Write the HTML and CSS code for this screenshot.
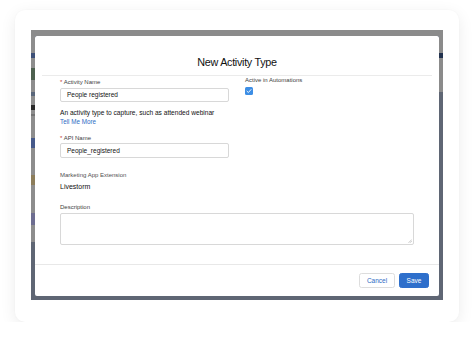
FILE: index.html
```html
<!DOCTYPE html>
<html lang="en">
<head>
<meta charset="utf-8">
<title>New Activity Type</title>
<link rel="stylesheet" href="styles.css">
</head>
<body>
<div class="card">
  <div class="frame">
    <div class="modal">
      <div class="modal-header">
        <h2 class="title">New Activity Type</h2>
      </div>
      <div class="modal-body">
        <div class="row">
          <div class="col-left">
            <div class="label"><span class="req">*</span> Activity Name</div>
            <div class="input">People registered</div>
            <div class="help">An activity type to capture, such as attended webinar</div>
            <a class="link">Tell Me More</a>
            <div class="label label-api"><span class="req">*</span> API Name</div>
            <div class="input input-api">People_registered</div>
            <div class="label label-ext">Marketing App Extension</div>
            <div class="value">Livestorm</div>
          </div>
          <div class="col-right">
            <div class="label label-active">Active in Automations</div>
            <div class="checkbox">
              <svg viewBox="0 0 8 8" width="8" height="8"><path d="M2 4.2 L3.4 5.5 L6 2.6" fill="none" stroke="#fff" stroke-width="0.9" stroke-linecap="round" stroke-linejoin="round"/></svg>
            </div>
          </div>
        </div>
        <div class="label label-desc">Description</div>
        <div class="textarea">
          <svg class="grip" viewBox="0 0 4 4" width="4" height="4"><path d="M0.5 3.8 L3.8 0.5 M2 3.8 L3.8 2" stroke="#999" stroke-width="0.5"/></svg>
        </div>
      </div>
      <div class="modal-footer">
        <button class="btn btn-neutral">Cancel</button>
        <button class="btn btn-brand">Save</button>
      </div>
    </div>
  </div>
</div>
</body>
</html>
```

FILE: styles.css
```css
* { box-sizing: border-box; }
html, body { margin: 0; padding: 0; background: #ffffff; }
body {
  font-family: "Liberation Sans", Arial, sans-serif;
  color: #181818;
  padding: 10px 15px 0 15px;
}
.card {
  width: 444px;
  height: 312px;
  background: #ffffff;
  border-radius: 10px;
  box-shadow: 0 4px 16px rgba(0,0,0,0.08), 0 0 2px rgba(0,0,0,0.03);
  padding: 20px 16px 22px 16px;
}
.frame {
  width: 412px;
  height: 270px;
  padding: 6px 4px 4px 4px;
  background-color: #5f6674;
  background-image:
    linear-gradient(#8b8b8b, #8b8b8b),
    linear-gradient(to bottom,
      #8d8d8d 0, #8d8d8d 23px, #3d5078 23px, #3d5078 28px,
      #8d8d8d 28px, #8d8d8d 38px, #4d604f 38px, #4d604f 50px,
      #8d8d8d 50px, #8d8d8d 62px, #59667a 62px, #59667a 66px,
      #8d8d8d 66px, #8d8d8d 75px, #2a2a2a 75px, #2a2a2a 80px,
      #8d8d8d 80px, #8d8d8d 84px, #737373 84px, #737373 86px,
      #8d8d8d 86px, #8d8d8d 108px, #46598a 108px, #46598a 118px,
      #8d8d8d 118px, #8d8d8d 145px, #8c7d5a 145px, #8c7d5a 155px,
      #8d8d8d 155px, #8d8d8d 183px, #6d6d90 183px, #6d6d90 195px,
      #8d8d8d 195px, #8d8d8d 212px, #5f6674 212px, #5f6674 100%),
    linear-gradient(to bottom,
      #8b8b8b 0, #8b8b8b 23px, #22324e 23px, #22324e 28px,
      #8b8b8b 28px, #8b8b8b 62px, #5f6674 62px, #5f6674 100%);
  background-size: 100% 6px, 4px 100%, 4px 100%;
  background-position: 0 0, 0 0, 100% 0;
  background-repeat: no-repeat;
}
.modal {
  width: 404px;
  height: 260px;
  background: #ffffff;
  border-radius: 2px;
  display: flex;
  flex-direction: column;
}
.modal-header {
  height: 40px;
  margin: 0 7px;
  border-bottom: 1px solid #ebebeb;
  display: flex;
  justify-content: center;
  align-items: flex-end;
  padding-bottom: 7px;
}
.title {
  margin: 0;
  font-size: 10.8px;
  font-weight: normal;
  line-height: 12px;
  letter-spacing: -0.3px;
  color: #111111;
}
.modal-body {
  flex: 1;
  padding: 2px 0 0 25px;
}
.row { display: flex; }
.col-left { width: 169px; display: flex; flex-direction: column; }
.col-right { margin-left: 16px; display: flex; flex-direction: column; }
.label {
  font-size: 6px;
  line-height: 8px;
  color: #3e3e3e;
}
.req { color: #c23934; }
.input {
  margin-top: 2px;
  height: 14px;
  border: 1px solid #d8d8d8;
  border-radius: 2px;
  font-size: 6.5px;
  line-height: 12px;
  padding-left: 6px;
  color: #111111;
}
.help {
  margin-top: 6px;
  font-size: 6.6px;
  line-height: 9px;
  color: #111111;
}
.link {
  font-size: 6.3px;
  line-height: 10px;
  color: #2d6bc4;
}
.label-api { margin-top: 7px; }
.input-api { margin-top: 1px; height: 15px; line-height: 13px; }
.label-ext { margin-top: 13px; color: #505050; }
.value {
  margin-top: 3px;
  font-size: 7px;
  line-height: 10px;
  color: #111111;
}
.label-active { margin-top: -2px; }
.checkbox {
  margin-top: 3px;
  width: 8px;
  height: 8px;
  border-radius: 1.5px;
  background: #3d8ee5;
  display: flex;
  align-items: center;
  justify-content: center;
}
.checkbox svg { display: block; }
.label-desc { margin-top: 11px; }
.textarea {
  margin-top: 2px;
  width: 354px;
  height: 32px;
  border: 1px solid #d8d8d8;
  border-radius: 2px;
  position: relative;
}
.grip { position: absolute; right: 1px; bottom: 1px; display: block; }
.modal-footer {
  height: 32px;
  border-top: 1px solid #e8e8e8;
  display: flex;
  justify-content: flex-end;
  align-items: center;
  gap: 4px;
  padding-right: 10px;
}
.btn {
  height: 15px;
  border-radius: 2.5px;
  font-family: "Liberation Sans", Arial, sans-serif;
  font-size: 6.5px;
  padding: 0;
  line-height: 13px;
}
.btn-neutral {
  width: 36px;
  background: #ffffff;
  border: 1px solid #dddddd;
  color: #2d6bc4;
}
.btn-brand {
  width: 30px;
  background: #2e6fcb;
  border: 1px solid #2e6fcb;
  color: #ffffff;
}
```
